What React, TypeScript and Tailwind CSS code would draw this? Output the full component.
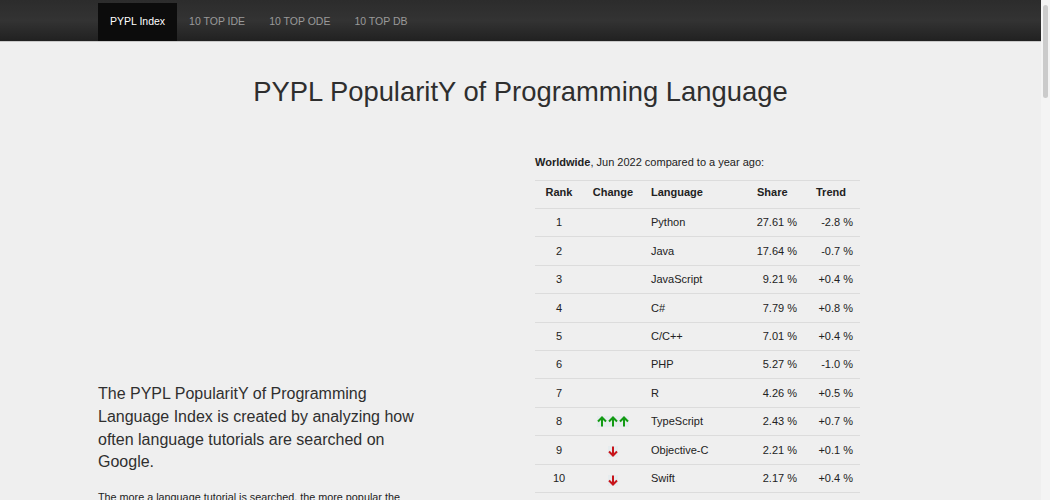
const navItems = ["PYPL Index", "10 TOP IDE", "10 TOP ODE", "10 TOP DB"];

type Row = {
  rank: number;
  change: "up3" | "down" | "";
  language: string;
  share: string;
  trend: string;
};

const rows: Row[] = [
  { rank: 1, change: "", language: "Python", share: "27.61 %", trend: "-2.8 %" },
  { rank: 2, change: "", language: "Java", share: "17.64 %", trend: "-0.7 %" },
  { rank: 3, change: "", language: "JavaScript", share: "9.21 %", trend: "+0.4 %" },
  { rank: 4, change: "", language: "C#", share: "7.79 %", trend: "+0.8 %" },
  { rank: 5, change: "", language: "C/C++", share: "7.01 %", trend: "+0.4 %" },
  { rank: 6, change: "", language: "PHP", share: "5.27 %", trend: "-1.0 %" },
  { rank: 7, change: "", language: "R", share: "4.26 %", trend: "+0.5 %" },
  { rank: 8, change: "up3", language: "TypeScript", share: "2.43 %", trend: "+0.7 %" },
  { rank: 9, change: "down", language: "Objective-C", share: "2.21 %", trend: "+0.1 %" },
  { rank: 10, change: "down", language: "Swift", share: "2.17 %", trend: "+0.4 %" },
  { rank: 11, change: "", language: "Kotlin", share: "1.87 %", trend: "+0.1 %" },
  { rank: 12, change: "", language: "Matlab", share: "1.59 %", trend: "-0.1 %" },
];

function UpArrow() {
  return (
    <svg width="10" height="11" viewBox="0 0 10 11" className="block">
      <path d="M5 10.5V2.5" stroke="#139a13" strokeWidth="2" fill="none" />
      <path d="M1 5.5L5 1.5L9 5.5" stroke="#139a13" strokeWidth="2" fill="none" />
    </svg>
  );
}

function DownArrow() {
  return (
    <svg width="10" height="11" viewBox="0 0 10 11" className="block">
      <path d="M5 0.5V8.5" stroke="#c8141a" strokeWidth="2" fill="none" />
      <path d="M1 5.5L5 9.5L9 5.5" stroke="#c8141a" strokeWidth="2" fill="none" />
    </svg>
  );
}

function Change({ kind }: { kind: Row["change"] }) {
  if (kind === "up3") {
    return (
      <span className="inline-flex translate-y-[1px] gap-[1px] bg-[#e6ecee]">
        <UpArrow />
        <UpArrow />
        <UpArrow />
      </span>
    );
  }
  if (kind === "down") {
    return (
      <span className="inline-flex translate-y-[3px] bg-[#e6ecee]">
        <DownArrow />
      </span>
    );
  }
  return null;
}

export default function App() {
  return (
    <div className="flex min-h-screen bg-[#efefef] font-['Liberation_Sans',Arial,sans-serif] text-[#333]">
      <div className="min-w-0 flex-1">
        <nav className="h-[42px] border-b border-[#c9c9c9] bg-gradient-to-b from-[#2c2c2c] via-[#333] to-[#212121] pt-[3px]">
          <ul className="flex h-[38px] pl-[98px]">
            {navItems.map((item, i) => (
              <li
                key={item}
                className={`flex h-full items-center px-[12px] text-[10.5px] ${
                  i === 0 ? "bg-[#0c0c0c] text-white" : "text-[#9a9a9a]"
                }`}
              >
                {item}
              </li>
            ))}
          </ul>
        </nav>

        <div className="mx-[98px]">
          <h1 className="pt-[34px] text-center text-[27.4px] leading-[32px] text-[#2e2e2e]">
            PYPL PopularitY of Programming Language
          </h1>

          <div className="mt-[47px] flex">
            <div className="w-[332px]">
              <div className="h-[228px]" />
              <p className="text-[16px] leading-[22.8px] text-[#2f2f2f]">
                The PYPL PopularitY of Programming Language Index is created by analyzing how
                often language tutorials are searched on Google.
              </p>
              <p className="mt-[16px] text-[10.8px] leading-[15px] text-[#222]">
                The more a language tutorial is searched, the more popular the language is assumed
                to be. It is a leading indicator. The raw data comes from Google Trends.
              </p>
              <p className="mt-[10px] text-[10.8px] leading-[15px] text-[#222]">
                If you believe in collective wisdom, the PYPL Popularity of Programming Language
                index can help you decide which language to study, or which one to use in a new
                software project.
              </p>
            </div>

            <div className="ml-[105px] w-[325px]">
              <p className="text-[11px] leading-[14px] text-[#222]">
                <b>Worldwide</b>, Jun 2022 compared to a year ago:
              </p>
              <table className="mt-[11px] w-[325px] table-fixed border-collapse text-[11px] text-[#222]">
                <colgroup>
                  <col className="w-[48px]" />
                  <col className="w-[60px]" />
                  <col className="w-[102px]" />
                  <col className="w-[60px]" />
                  <col className="w-[55px]" />
                </colgroup>
                <thead>
                  <tr className="h-[28px] border-t border-[#dcdcdc]">
                    <th className="pb-[4px] text-center font-bold">Rank</th>
                    <th className="pb-[4px] text-center font-bold">Change</th>
                    <th className="pb-[4px] pl-[8px] text-left font-bold">Language</th>
                    <th className="pb-[4px] pl-[12px] text-left font-bold">Share</th>
                    <th className="pb-[4px] pl-[11px] text-left font-bold">Trend</th>
                  </tr>
                </thead>
                <tbody>
                  {rows.map((r) => (
                    <tr key={r.rank} className="h-[28.4px] border-t border-[#dcdcdc]">
                      <td className="text-center">{r.rank}</td>
                      <td className="text-center leading-none">
                        <Change kind={r.change} />
                      </td>
                      <td className="pl-[8px]">{r.language}</td>
                      <td className="pr-[8px] text-right">{r.share}</td>
                      <td className="pr-[7px] text-right">{r.trend}</td>
                    </tr>
                  ))}
                </tbody>
              </table>
            </div>
          </div>
          <div className="h-[40px]" />
        </div>
      </div>

      {/* scrollbar strip */}
      <div className="w-[9px] shrink-0 bg-[#f4f4f4] px-[2px] pt-[5px]">
        <div className="h-[93px] rounded-full bg-[#cbcbcb]" />
      </div>
    </div>
  );
}
